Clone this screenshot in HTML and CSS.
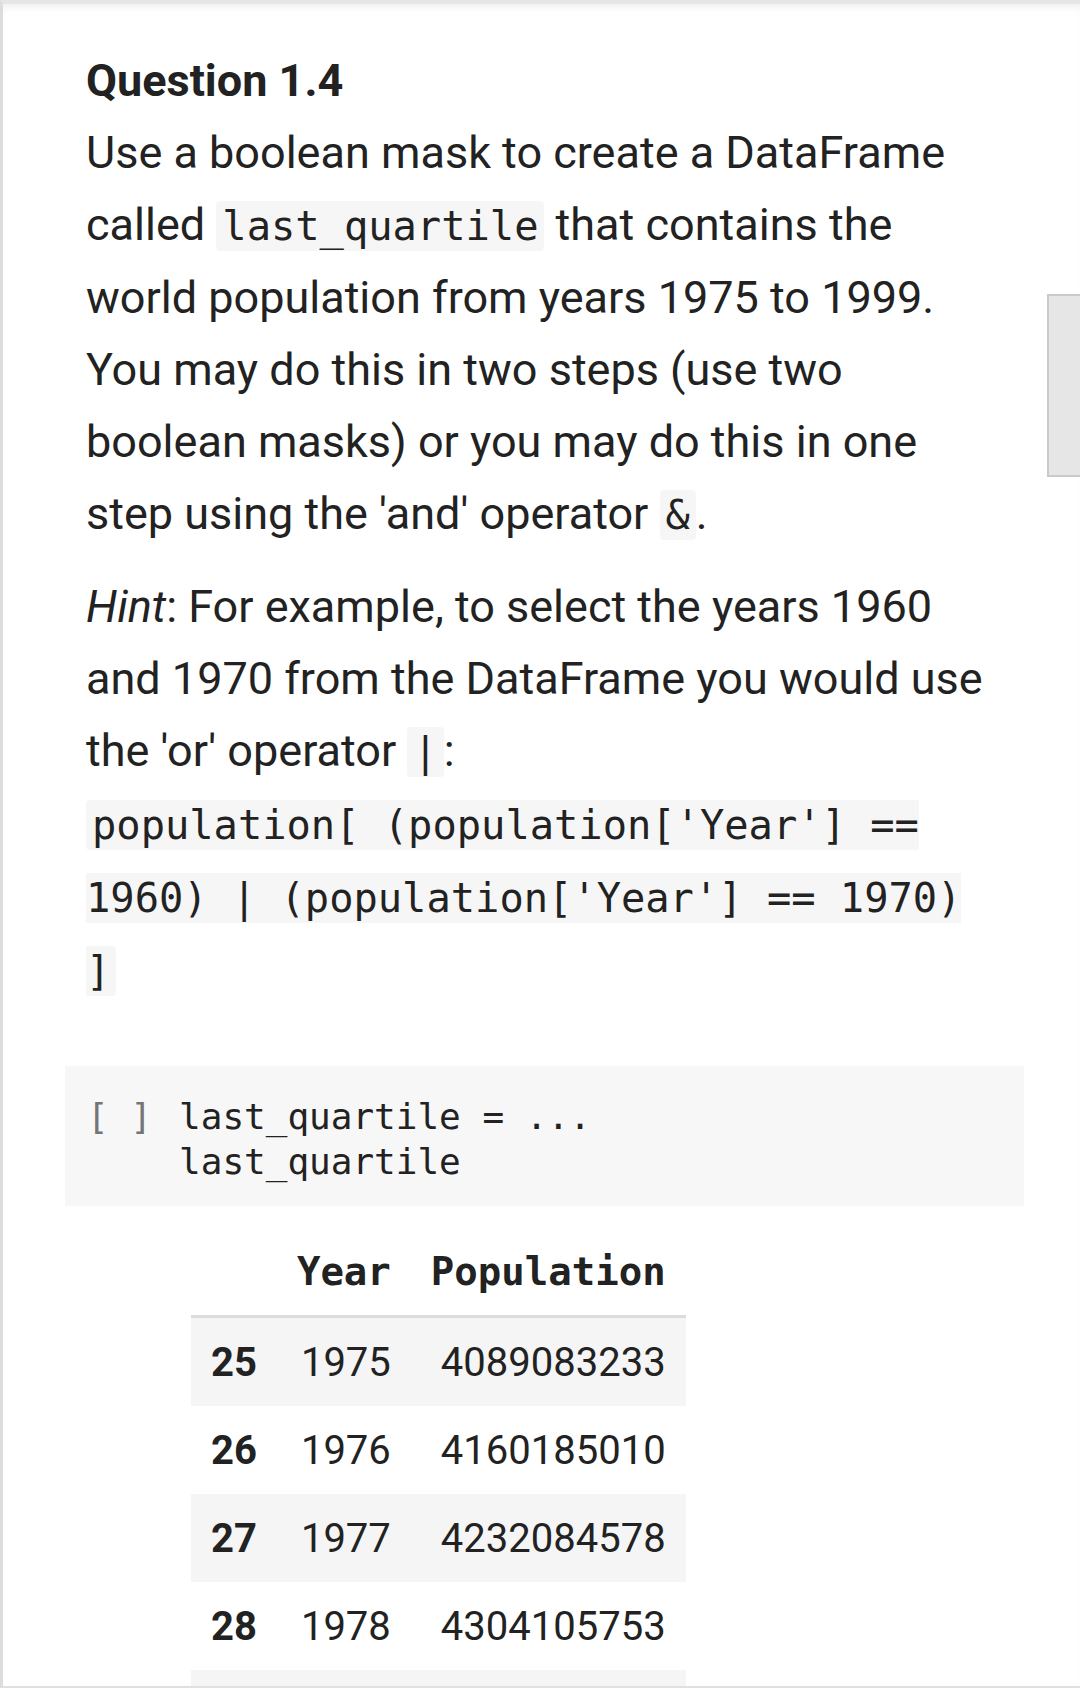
FILE: index.html
```html
<!DOCTYPE html>
<html lang="en">
<head>
<meta charset="utf-8">
<title>Question 1.4</title>
<link rel="stylesheet" href="styles.css">
</head>
<body>
<div class="frame">
  <div class="markdown">
    <h3 class="title">Question 1.4</h3>
    <p class="para">Use a boolean mask to create a DataFrame called <code class="ic">last_quartile</code> that contains the world population from years 1975 to 1999. You may do this in two steps (use two boolean masks) or you may do this in one step using the 'and' operator <code class="ic">&amp;</code>.</p>
    <p class="para"><em>Hint</em>: For example, to select the years 1960 and 1970 from the DataFrame you would use the 'or' operator <code class="ic">|</code>:<br><code class="ic">population[ (population['Year'] == 1960) | (population['Year'] == 1970) ]</code></p>
  </div>

  <div class="code-cell">
    <div class="gutter">[ ]</div>
    <pre class="source">last_quartile = ...
last_quartile</pre>
  </div>

  <div class="output">
    <table class="df">
      <thead>
        <tr><th></th><th>Year</th><th>Population</th></tr>
      </thead>
      <tbody>
        <tr><th>25</th><td>1975</td><td>4089083233</td></tr>
        <tr><th>26</th><td>1976</td><td>4160185010</td></tr>
        <tr><th>27</th><td>1977</td><td>4232084578</td></tr>
        <tr><th>28</th><td>1978</td><td>4304105753</td></tr>
        <tr><th>29</th><td>1979</td><td></td></tr>
      </tbody>
    </table>
  </div>

  <div class="scroll-thumb"></div>
</div>
</body>
</html>
```
FILE: styles.css
```css
body {
  margin: 0;
  background: #ffffff;
}

.frame {
  position: relative;
  width: 1080px;
  height: 1688px;
  box-sizing: border-box;
  border-left: 3px solid #dcdcdc;
  border-top: 4px solid #e6e6e6;
  border-bottom: 2px solid #e0e0e0;
  box-shadow: inset 0 8px 10px -6px rgba(0, 0, 0, 0.08);
  overflow: hidden;
  font-family: Roboto, "Noto Sans", sans-serif;
  color: #222222;
  background: #ffffff;
}

.markdown {
  padding: 41px 0 0 83px;
  width: 909px;
}

.title {
  margin: 0;
  font-size: 45px;
  line-height: 72px;
  font-weight: 700;
}

.para {
  margin: 0;
  font-size: 45px;
  line-height: 72px;
}

.para + .para {
  margin-top: 20px;
}

.ic {
  font-family: "DejaVu Sans Mono", monospace;
  font-size: 40.4px;
  background: #f6f6f6;
  padding: 1px 6px;
  border-radius: 4px;
}

.code-cell {
  display: flex;
  margin: 59px 0 0 62px;
  width: 959px;
  box-sizing: border-box;
  padding: 28px 0 22px 22px;
  background: #f7f7f7;
  font-family: "DejaVu Sans Mono", monospace;
  font-size: 36px;
  line-height: 45px;
}

.gutter {
  color: #757575;
  margin-right: 27px;
  white-space: pre;
}

.source {
  margin: 0;
  font: inherit;
  color: #222222;
  white-space: pre;
}

.output {
  padding: 21px 0 0 188px;
}

.df {
  border-collapse: collapse;
}

.df th,
.df td {
  height: 88px;
  padding: 0 20px;
  text-align: right;
  vertical-align: middle;
}

.df thead th {
  height: 88px;
  font-family: "DejaVu Sans Mono", monospace;
  font-weight: 700;
  font-size: 39px;
  border-bottom: 3px solid #dcdcdc;
}

.df tbody th {
  font-weight: 700;
  font-size: 40px;
}

.df tbody td {
  font-size: 40px;
}

.df tbody tr:nth-child(odd) {
  background: #f5f5f5;
}

.scroll-thumb {
  position: absolute;
  left: 1044px;
  top: 290px;
  width: 40px;
  height: 183px;
  box-sizing: border-box;
  background: #e6e6e6;
  border: 2px solid #cacaca;
}
```
